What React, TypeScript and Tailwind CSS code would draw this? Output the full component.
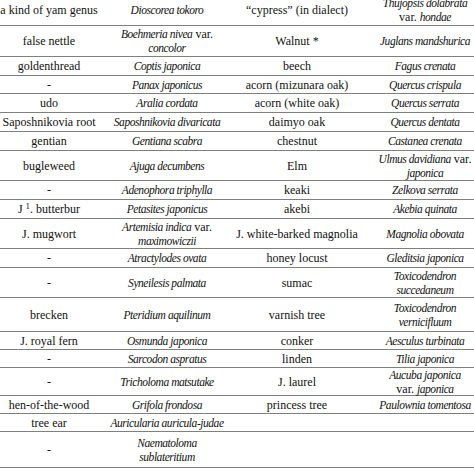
import React from 'react';

// common-name / scientific-name pairs, two pairs per row
type Row = { h: string; cells: React.ReactNode[] };

const I = ({ children }: { children: React.ReactNode }) => (
  <span className="italic text-[11.5px] tracking-[-0.45px]">{children}</span>
);

const rows: Row[] = [
  {
    h: 'h-[32px]',
    cells: [
      'a kind of yam genus',
      <I>Dioscorea tokoro</I>,
      '\u201Ccypress\u201D (in dialect)',
      <>
        <I>Thujopsis dolabrata</I>
        <br />
        var. <I>hondae</I>
      </>
    ]
  },
  {
    h: 'h-[31px]',
    cells: [
      'false nettle',
      <>
        <I>Boehmeria nivea</I> var.
        <br />
        <I>concolor</I>
      </>,
      'Walnut *',
      <I>Juglans mandshurica</I>
    ]
  },
  { h: 'h-[19px]', cells: ['goldenthread', <I>Coptis japonica</I>, 'beech', <I>Fagus crenata</I>] },
  { h: 'h-[18px]', cells: ['-', <I>Panax japonicus</I>, 'acorn (mizunara oak)', <I>Quercus crispula</I>] },
  { h: 'h-[19px]', cells: ['udo', <I>Aralia cordata</I>, 'acorn (white oak)', <I>Quercus serrata</I>] },
  {
    h: 'h-[19px]',
    cells: ['Saposhnikovia root', <I>Saposhnikovia divaricata</I>, 'daimyo oak', <I>Quercus dentata</I>]
  },
  { h: 'h-[19px]', cells: ['gentian', <I>Gentiana scabra</I>, 'chestnut', <I>Castanea crenata</I>] },
  {
    h: 'h-[30px]',
    cells: [
      'bugleweed',
      <I>Ajuga decumbens</I>,
      'Elm',
      <>
        <I>Ulmus davidiana</I> var.
        <br />
        <I>japonica</I>
      </>
    ]
  },
  { h: 'h-[19px]', cells: ['-', <I>Adenophora triphylla</I>, 'keaki', <I>Zelkova serrata</I>] },
  {
    h: 'h-[19px]',
    cells: [
      <>
        J<sup className="ml-[3px] text-[9px]">1</sup>. butterbur
      </>,
      <I>Petasites japonicus</I>,
      'akebi',
      <I>Akebia quinata</I>
    ]
  },
  {
    h: 'h-[30px]',
    cells: [
      'J. mugwort',
      <>
        <I>Artemisia indica</I> var.
        <br />
        <I>maximowiczii</I>
      </>,
      'J. white-barked magnolia',
      <I>Magnolia obovata</I>
    ]
  },
  { h: 'h-[19px]', cells: ['-', <I>Atractylodes ovata</I>, 'honey locust', <I>Gleditsia japonica</I>] },
  {
    h: 'h-[30px]',
    cells: [
      '-',
      <I>Syneilesis palmata</I>,
      'sumac',
      <I>
        Toxicodendron
        <br />
        succedaneum
      </I>
    ]
  },
  {
    h: 'h-[34px]',
    cells: [
      'brecken',
      <I>Pteridium aquilinum</I>,
      'varnish tree',
      <I>
        Toxicodendron
        <br />
        vernicifluum
      </I>
    ]
  },
  { h: 'h-[18px]', cells: ['J. royal fern', <I>Osmunda japonica</I>, 'conker', <I>Aesculus turbinata</I>] },
  { h: 'h-[18px]', cells: ['-', <I>Sarcodon aspratus</I>, 'linden', <I>Tilia japonica</I>] },
  {
    h: 'h-[28px]',
    cells: [
      '-',
      <I>Tricholoma matsutake</I>,
      'J. laurel',
      <>
        <I>Aucuba japonica</I>
        <br />
        var. <I>japonica</I>
      </>
    ]
  },
  {
    h: 'h-[18px]',
    cells: ['hen-of-the-wood', <I>Grifola frondosa</I>, 'princess tree', <I>Paulownia tomentosa</I>]
  },
  { h: 'h-[18px]', cells: ['tree ear', <I>Auricularia auricula-judae</I>, '', ''] },
  {
    h: 'h-[36px]',
    cells: [
      '-',
      <I>
        Naematoloma
        <br />
        sublateritium
      </I>,
      '',
      ''
    ]
  }
];

export default function App() {
  return (
    <div className="h-[474px] w-[474px] overflow-hidden bg-white font-['Liberation_Serif',serif] text-[12px] text-[#111]">
      <div className="-ml-[4px] -mt-[6px] w-[492px]">
        {rows.map((row, i) => (
          <div
            key={i}
            className={`grid grid-cols-[106px_130px_130px_126px] items-center border-b border-[#7f7f7f] ${row.h}`}
          >
            {row.cells.map((cell, j) => (
              <div key={j} className="whitespace-nowrap text-center leading-[14px]">
                {cell}
              </div>
            ))}
          </div>
        ))}
      </div>
    </div>
  );
}
